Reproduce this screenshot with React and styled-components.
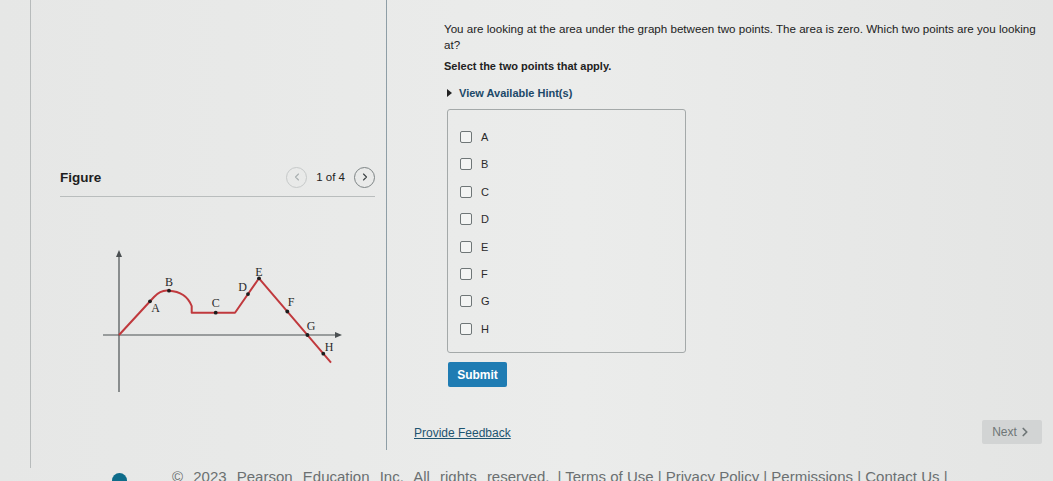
import styled, { createGlobalStyle } from 'styled-components';

const GlobalStyle = createGlobalStyle`
  html, body {
    margin: 0;
    padding: 0;
    background: #e9eae9;
  }
  body {
    font-family: "Liberation Sans", Arial, sans-serif;
    color: #222;
    overflow: hidden;
  }
`;

const Page = styled.div`
  width: 1053px;
  height: 481px;
  overflow: hidden;
  background: linear-gradient(90deg, #e6e7e6 0%, #ebeceb 55%, #e4e5e4 100%);
  padding-left: 30px;
  box-sizing: border-box;
`;

const Frame = styled.div`
  border-left: 1px solid #b7bbbb;
  padding-bottom: 18px;
`;

const Columns = styled.div`
  display: flex;
  height: 450px;
`;

const FigureColumn = styled.div`
  box-sizing: border-box;
  width: 355px;
  flex-shrink: 0;
  padding: 163px 11px 0 29px;
  display: flex;
  flex-direction: column;
`;

const FigureHeader = styled.div`
  display: flex;
  align-items: center;
  height: 28px;
  padding-bottom: 5px;
  border-bottom: 1px solid #b9bdbd;
`;

const FigureTitle = styled.h2`
  margin: 0;
  font-size: 13.5px;
  font-weight: bold;
  color: #1e1e1e;
  flex: 1;
`;

const Pager = styled.div`
  display: flex;
  align-items: center;
  gap: 9px;
  font-size: 11.5px;
  color: #222;
`;

const PageButton = styled.button`
  width: 21px;
  height: 21px;
  border-radius: 50%;
  border: 1px solid ${(p) => (p.$disabled ? '#c6c9c9' : '#7d8485')};
  background: transparent;
  padding: 0;
  display: flex;
  align-items: center;
  justify-content: center;
  color: ${(p) => (p.$disabled ? '#a9afb0' : '#3b4244')};
`;

const GraphWrap = styled.div`
  margin: 43px 0 0 40px;
  width: 250px;
  height: 160px;
`;

const QuestionColumn = styled.div`
  flex: 1;
  border-left: 1px solid #8e9ea6;
  display: flex;
  flex-direction: column;
`;

const Content = styled.div`
  padding: 21px 0 0 57px;
`;

const Prompt = styled.p`
  margin: 0;
  font-size: 11.6px;
  line-height: 15.5px;
  color: #222;
  width: 596px;
`;

const Instruction = styled.p`
  margin: 6.5px 0 0;
  font-size: 11px;
  line-height: 15px;
  font-weight: bold;
  color: #222;
`;

const Hint = styled.div`
  margin-top: 13px;
  display: flex;
  align-items: center;
  gap: 7px;
  font-size: 11px;
  font-weight: bold;
  color: #1b4868;
  padding-left: 3px;
`;

const Triangle = styled.span`
  width: 0;
  height: 0;
  border-top: 4px solid transparent;
  border-bottom: 4px solid transparent;
  border-left: 5px solid #222;
`;

const OptionsBox = styled.div`
  box-sizing: border-box;
  margin: 10px 0 0 3px;
  width: 239px;
  border: 1px solid #a4a9a9;
  border-radius: 3px;
  padding: 22px 0 18px 12px;
  display: flex;
  flex-direction: column;
  gap: 16.4px;
`;

const Option = styled.label`
  display: flex;
  align-items: center;
  gap: 9px;
  height: 11px;
  font-size: 11px;
  color: #2a2a2a;
`;

const Box = styled.span`
  width: 10px;
  height: 10px;
  border: 1px solid #6f7677;
  border-radius: 2px;
  background: #f3f4f3;
`;

const SubmitButton = styled.button`
  margin: 9px 0 0 4px;
  width: 59px;
  height: 25px;
  border: none;
  border-radius: 2px;
  background: #1f7cb3;
  color: #fff;
  font-family: inherit;
  font-size: 12px;
  font-weight: bold;
`;

const BottomRow = styled.div`
  margin-top: auto;
  display: flex;
  align-items: center;
  justify-content: space-between;
  padding: 0 11px 6px 27px;
`;

const FeedbackLink = styled.a`
  font-size: 12px;
  color: #1d5470;
  text-decoration: underline;
  margin-top: 2px;
`;

const NextButton = styled.button`
  width: 60px;
  height: 24px;
  border: none;
  border-radius: 2px;
  background: #d2d4d4;
  color: #6f7677;
  font-family: inherit;
  font-size: 12px;
  display: flex;
  align-items: center;
  justify-content: center;
  gap: 1px;
  padding: 0;
`;

const Footer = styled.div`
  display: flex;
  align-items: flex-start;
  padding: 0 0 0 82px;
  font-size: 15px;
  line-height: 17px;
  color: #6b7071;
  white-space: nowrap;
`;

const Logo = styled.span`
  width: 15px;
  height: 15px;
  margin-top: 5px;
  border-radius: 50%;
  background: #0e6c8a;
`;

const Copyright = styled.span`
  margin-left: 45px;
  word-spacing: 6px;
`;

const FooterLinks = styled.span`
  margin-left: 8px;
`;

function Chevron({ dir = 'right', size = 12, weight = 2.2 }) {
  const d = dir === 'right' ? 'M9 6l6 6-6 6' : 'M15 6l-6 6 6 6';
  return (
    <svg width={size} height={size} viewBox="0 0 24 24" fill="none" stroke="currentColor" strokeWidth={weight} strokeLinecap="round" strokeLinejoin="round">
      <path d={d} />
    </svg>
  );
}

const points = [
  { id: 'A', x: 50, y: 61.3, lx: 55.5, ly: 72 },
  { id: 'B', x: 69, y: 50.7, lx: 69, ly: 45.5 },
  { id: 'C', x: 115.7, y: 72.7, lx: 115.7, ly: 67 },
  { id: 'D', x: 148, y: 54.1, lx: 142.5, ly: 51 },
  { id: 'E', x: 159, y: 38.3, lx: 159, ly: 35.5 },
  { id: 'F', x: 187.3, y: 71.5, lx: 191, ly: 66 },
  { id: 'G', x: 207.4, y: 95, lx: 211, ly: 90 },
  { id: 'H', x: 223.3, y: 113.7, lx: 229, ly: 111 },
];

function Graph() {
  return (
    <svg width="250" height="160" viewBox="0 0 250 160">
      <g stroke="#4b5052" strokeWidth="1.2" fill="none">
        <line x1="19" y1="15" x2="19" y2="152" />
        <line x1="3" y1="95" x2="237" y2="95" />
      </g>
      <path d="M19 10 L16 17 L22 17 Z" fill="#4b5052" />
      <path d="M242 95 L235 92 L235 98 Z" fill="#4b5052" />
      <path
        d="M19 95 L54 57 Q61 49.5 69 50.7 Q86 51.5 91.7 66 L91.7 72.7 L135 72.7 L159 38.3 L231 122.7"
        fill="none"
        stroke="#c0393d"
        strokeWidth="2"
        strokeLinejoin="round"
      />
      {points.map((p) => (
        <g key={p.id}>
          <circle cx={p.x} cy={p.y} r="1.9" fill="#1c1c1c" />
          <text x={p.lx} y={p.ly} fontFamily="'Liberation Serif', serif" fontSize="12" fill="#2b2b2b" textAnchor="middle">
            {p.id}
          </text>
        </g>
      ))}
    </svg>
  );
}

export default function App() {
  const options = ['A', 'B', 'C', 'D', 'E', 'F', 'G', 'H'];
  return (
    <>
      <GlobalStyle />
      <Page>
        <Frame>
          <Columns>
            <FigureColumn>
              <FigureHeader>
                <FigureTitle>Figure</FigureTitle>
                <Pager>
                  <PageButton $disabled aria-label="previous">
                    <Chevron dir="left" />
                  </PageButton>
                  <span>1 of 4</span>
                  <PageButton aria-label="next">
                    <Chevron dir="right" />
                  </PageButton>
                </Pager>
              </FigureHeader>
              <GraphWrap>
                <Graph />
              </GraphWrap>
            </FigureColumn>
            <QuestionColumn>
              <Content>
                <Prompt>
                  You are looking at the area under the graph between two points. The area is zero. Which two points are you looking at?
                </Prompt>
                <Instruction>Select the two points that apply.</Instruction>
                <Hint>
                  <Triangle />
                  View Available Hint(s)
                </Hint>
                <OptionsBox>
                  {options.map((o) => (
                    <Option key={o}>
                      <Box />
                      {o}
                    </Option>
                  ))}
                </OptionsBox>
                <SubmitButton>Submit</SubmitButton>
              </Content>
              <BottomRow>
                <FeedbackLink href="#">Provide Feedback</FeedbackLink>
                <NextButton>
                  Next
                  <Chevron dir="right" size={14} weight={3} />
                </NextButton>
              </BottomRow>
            </QuestionColumn>
          </Columns>
        </Frame>
        <Footer>
          <Logo />
          <Copyright>© 2023 Pearson Education Inc. All rights reserved.</Copyright>
          <FooterLinks>| Terms of Use | Privacy Policy | Permissions | Contact Us |</FooterLinks>
        </Footer>
      </Page>
    </>
  );
}
